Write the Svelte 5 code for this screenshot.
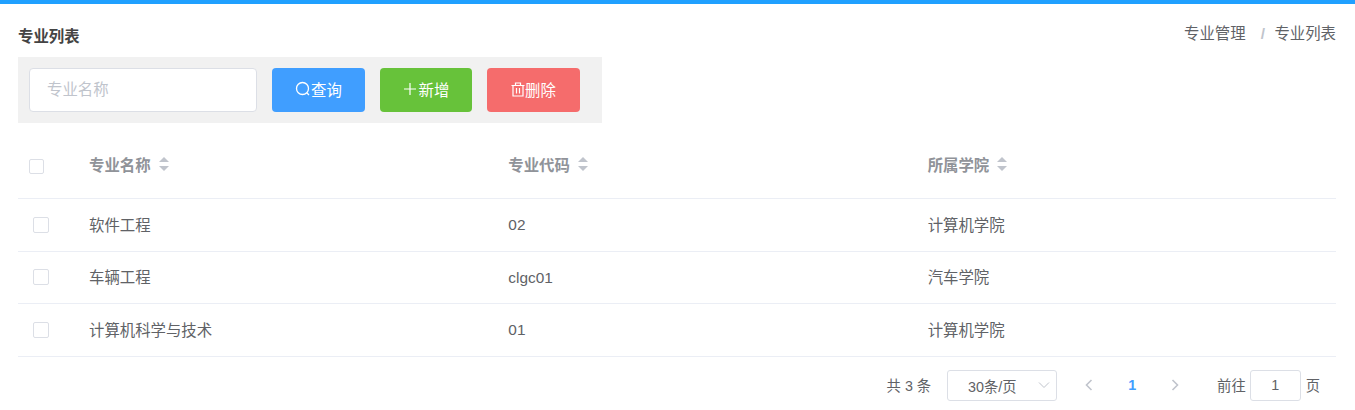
<script lang="ts">
    type Major = { name: string; code: string; college: string };

    const majors: Major[] = [
        { name: '软件工程', code: '02', college: '计算机学院' },
        { name: '车辆工程', code: 'clgc01', college: '汽车学院' },
        { name: '计算机科学与技术', code: '01', college: '计算机学院' }
    ];

    const columns = ['专业名称', '专业代码', '所属学院'];
</script>

<div class="topbar"></div>

<main>
    <header class="page-head">
        <h1>专业列表</h1>
        <nav class="crumbs">
            <span>专业管理</span>
            <span class="sep">/</span>
            <span>专业列表</span>
        </nav>
    </header>

    <div class="toolbar">
        <input class="search" type="text" placeholder="专业名称" />
        <button class="btn blue">
            <svg viewBox="0 0 16 16" width="16" height="16" fill="none" stroke="currentColor" stroke-width="1.3">
                <circle cx="7.5" cy="7.5" r="6" />
                <path d="M11.8 11.8 L14 14" />
            </svg>查询
        </button>
        <button class="btn green">
            <svg viewBox="0 0 16 14" width="16" height="14" fill="none" stroke="currentColor" stroke-width="1.2">
                <path d="M7 1 V13 M1 7 H13" />
            </svg>新增
        </button>
        <button class="btn red">
            <svg viewBox="0 0 14 15" width="14" height="15" fill="none" stroke="currentColor" stroke-width="1.2">
                <path d="M0.5 3.5 H13.5 M4.5 3.5 V1 H9.5 V3.5 M2 3.5 V14 H12 V3.5 M5.5 6 V11.5 M8.5 6 V11.5" />
            </svg>删除
        </button>
    </div>

    <table>
        <colgroup>
            <col class="check-col" />
            <col /><col /><col />
        </colgroup>
        <thead>
            <tr>
                <th class="head-check"><span class="checkbox small"></span></th>
                {#each columns as col}
                    <th>
                        <span class="th-inner">
                            {col}
                            <span class="carets"><i class="up"></i><i class="down"></i></span>
                        </span>
                    </th>
                {/each}
            </tr>
        </thead>
        <tbody>
            {#each majors as m}
                <tr>
                    <td class="row-check"><span class="checkbox"></span></td>
                    <td class="cjk">{m.name}</td>
                    <td class="code">{m.code}</td>
                    <td class="cjk">{m.college}</td>
                </tr>
            {/each}
        </tbody>
    </table>

    <footer class="pager">
        <span class="total">共 3 条</span>
        <div class="size-select">
            <span>30条/页</span>
            <svg viewBox="0 0 12 8" width="12" height="8" fill="none" stroke="#c0c4cc" stroke-width="1">
                <path d="M1 1.5 L6 6.5 L11 1.5" />
            </svg>
        </div>
        <svg class="arrow prev" viewBox="0 0 8 12" width="8" height="12" fill="none" stroke="#c0c4cc" stroke-width="1.6">
            <path d="M6.5 1 L1.5 6 L6.5 11" />
        </svg>
        <span class="current">1</span>
        <svg class="arrow next" viewBox="0 0 8 12" width="8" height="12" fill="none" stroke="#c0c4cc" stroke-width="1.6">
            <path d="M1.5 1 L6.5 6 L1.5 11" />
        </svg>
        <span class="goto">前往</span>
        <input class="jump" type="text" value="1" />
        <span class="unit">页</span>
    </footer>
</main>

<style>
    :global(body) {
        margin: 0;
        background: #fff;
        font-family: "Liberation Sans", "Noto Sans CJK SC", sans-serif;
        color: #606266;
    }

    .topbar {
        height: 4px;
        background: #20a0ff;
    }

    main {
        padding: 0 19px 0 18px;
    }

    .page-head {
        display: flex;
        justify-content: space-between;
        height: 53px;
    }

    h1 {
        margin: 24px 0 0;
        font-size: 15.4px;
        line-height: 18px;
        font-weight: 700;
        color: #444;
    }

    .crumbs {
        margin-top: 21px;
        font-size: 15.4px;
        line-height: 18px;
        color: #606266;
    }

    .sep {
        margin: 0 5px 0 11px;
        font-weight: 700;
        color: #c0c4cc;
    }

    .toolbar {
        display: flex;
        align-items: center;
        gap: 15px;
        width: 584px;
        height: 66px;
        padding: 0 11px;
        box-sizing: border-box;
        background: #f1f1f1;
    }

    .search {
        width: 228px;
        height: 44px;
        padding: 0 17px;
        box-sizing: border-box;
        border: 1px solid #dcdfe6;
        border-radius: 4px;
        font: 15.4px "Liberation Sans", "Noto Sans CJK SC", sans-serif;
        outline: none;
    }

    .search::placeholder {
        color: #c0c4cc;
    }

    .btn {
        display: flex;
        align-items: center;
        justify-content: center;
        width: 93px;
        height: 44px;
        padding: 0 0 2px;
        box-sizing: border-box;
        border: none;
        border-radius: 4px;
        color: #fff;
        font: 15.4px "Liberation Sans", "Noto Sans CJK SC", sans-serif;
    }

    .blue { background: #409eff; }
    .green { background: #67c23a; width: 92px; }
    .red { background: #f56c6c; }

    table {
        width: 100%;
        table-layout: fixed;
        border-collapse: collapse;
        font-size: 15.4px;
    }

    .check-col {
        width: 60px;
    }

    th {
        height: 69px;
        padding: 6px 11px 0;
        text-align: left;
        font-weight: 700;
        color: #909399;
        border-bottom: 1px solid #ebeef5;
    }

    td {
        height: 51.6px;
        padding: 0 11px;
        border-bottom: 1px solid #ebeef5;
    }

    /* digits sit higher than the CJK glyphs in this font pair */
    td.cjk {
        height: 49.6px;
        padding-bottom: 2px;
    }

    td.code {
        height: 50.6px;
        padding-top: 1px;
    }

    .th-inner {
        display: inline-flex;
        align-items: center;
        gap: 8px;
    }

    .carets {
        display: inline-flex;
        flex-direction: column;
        gap: 4px;
    }

    .carets i {
        width: 0;
        height: 0;
        border-left: 5px solid transparent;
        border-right: 5px solid transparent;
    }

    .carets .up { border-bottom: 5px solid #c0c4cc; }
    .carets .down { border-top: 5px solid #c0c4cc; }

    .checkbox {
        display: block;
        width: 16px;
        height: 16px;
        box-sizing: border-box;
        border: 1px solid #dcdfe6;
        border-radius: 2px;
        background: #fff;
    }

    .checkbox.small {
        width: 15px;
        height: 15px;
        margin-top: 6px;
    }

    .row-check .checkbox {
        margin-left: 4px;
    }

    .pager {
        display: flex;
        align-items: center;
        height: 31px;
        margin-top: 13px;
        font-size: 14.3px;
        justify-content: flex-end;
        padding-right: 16px;
    }

    .pager > span {
        padding-bottom: 1px;
    }

    .size-select {
        display: flex;
        align-items: center;
        justify-content: space-between;
        width: 110px;
        height: 31px;
        margin-left: 16px;
        padding: 0 6px 0 20px;
        box-sizing: border-box;
        border: 1px solid #dcdfe6;
        border-radius: 3px;
    }

    .prev { margin-left: 28px; }
    .current {
        width: 16px;
        margin-left: 31px;
        text-align: center;
        font-weight: 700;
        color: #409eff;
    }
    .next { margin-left: 31px; }
    .goto { margin-left: 38px; }

    .jump {
        width: 51px;
        height: 31px;
        margin: 0 5px 0 4px;
        padding: 0;
        box-sizing: border-box;
        border: 1px solid #dcdfe6;
        border-radius: 3px;
        text-align: center;
        color: #606266;
        font: 14.3px "Liberation Sans", "Noto Sans CJK SC", sans-serif;
    }
</style>
